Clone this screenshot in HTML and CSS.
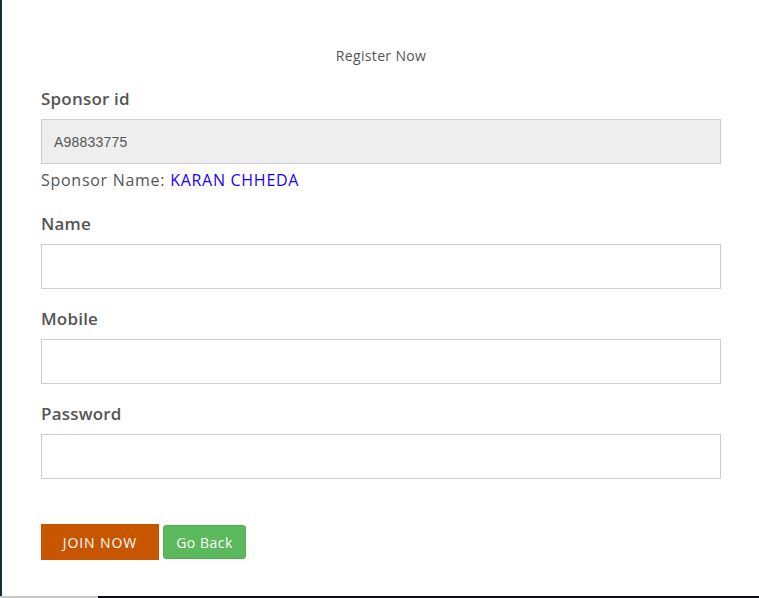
FILE: index.html
```html
<!DOCTYPE html>
<html>
<head>
<meta charset="utf-8">
<title>Register Now</title>
<link rel="stylesheet" href="styles.css">
</head>
<body>
<div class="page">
  <div class="panel">
    <h1 class="title">Register Now</h1>
    <form class="form">
      <div class="group sponsor">
        <label class="label">Sponsor id</label>
        <input class="field readonly" type="text" value="A98833775" readonly>
        <div class="sponsor-name">Sponsor Name: <span class="sponsor-value">KARAN CHHEDA</span></div>
      </div>
      <div class="group">
        <label class="label">Name</label>
        <input class="field" type="text">
      </div>
      <div class="group">
        <label class="label">Mobile</label>
        <input class="field" type="text">
      </div>
      <div class="group">
        <label class="label">Password</label>
        <input class="field" type="password">
      </div>
      <div class="actions">
        <button type="button" class="btn btn-join">JOIN NOW</button>
        <button type="button" class="btn btn-back">Go Back</button>
      </div>
    </form>
  </div>
  <div class="bottom-bar">
    <div class="bar-grey"></div>
    <div class="bar-dark"></div>
  </div>
</div>
</body>
</html>
```
FILE: styles.css
```css
* { box-sizing: border-box; }
html, body { margin: 0; padding: 0; height: 100%; }
body {
  background: #fff;
  font-family: "Open Sans", "DejaVu Sans", sans-serif;
  color: #555;
  overflow: hidden;
}
.page {
  height: 598px;
  display: flex;
  flex-direction: column;
}
.panel {
  flex: 1;
  border-left: 2px solid #16313d;
  padding: 46px 38px 0 39px;
  background: #fff;
}
.title {
  margin: 0 0 21px 0;
  text-align: center;
  font-size: 14px;
  font-weight: 400;
  line-height: 20px;
  letter-spacing: 0.35px;
  color: #555;
}
.form { display: flex; flex-direction: column; }
.group {
  display: flex;
  flex-direction: column;
  margin-bottom: 18px;
}
.group.sponsor { margin-bottom: 20px; }
.label {
  font-size: 17px;
  font-weight: 600;
  line-height: 24px;
  letter-spacing: 0.2px;
  margin-bottom: 8px;
  color: #555;
}
.field {
  height: 45px;
  width: 100%;
  border: 1px solid #ccc;
  background: #fff;
  padding: 0 12px;
  font-family: "Liberation Sans", Arial, sans-serif;
  font-size: 14px;
  letter-spacing: 0.2px;
  color: #555;
  outline: none;
}
.field.readonly { background: #eee; }
.sponsor-name {
  margin-top: 4px;
  font-size: 16px;
  line-height: 24px;
  letter-spacing: 0.72px;
  color: #555;
}
.sponsor-value { color: #1a00ff; }
.actions {
  display: flex;
  align-items: center;
  gap: 4px;
  margin-top: 27px;
}
.btn {
  font-family: "Open Sans", "DejaVu Sans", sans-serif;
  font-size: 14px;
  font-weight: 500;
  color: #fff;
  cursor: pointer;
  padding: 0;
}
.btn-join {
  width: 118px;
  height: 36px;
  background: #c85500;
  border: none;
  border-radius: 0;
  letter-spacing: 0.9px;
}
.btn-back {
  width: 83px;
  height: 34px;
  background: #5cb85c;
  border: 1px solid #4cae4c;
  border-radius: 3px;
  letter-spacing: 0.5px;
}
.bottom-bar {
  height: 2px;
  display: flex;
}
.bar-grey { width: 98px; background: #c8c8c8; }
.bar-dark { flex: 1; background: #0b0f17; }
```
